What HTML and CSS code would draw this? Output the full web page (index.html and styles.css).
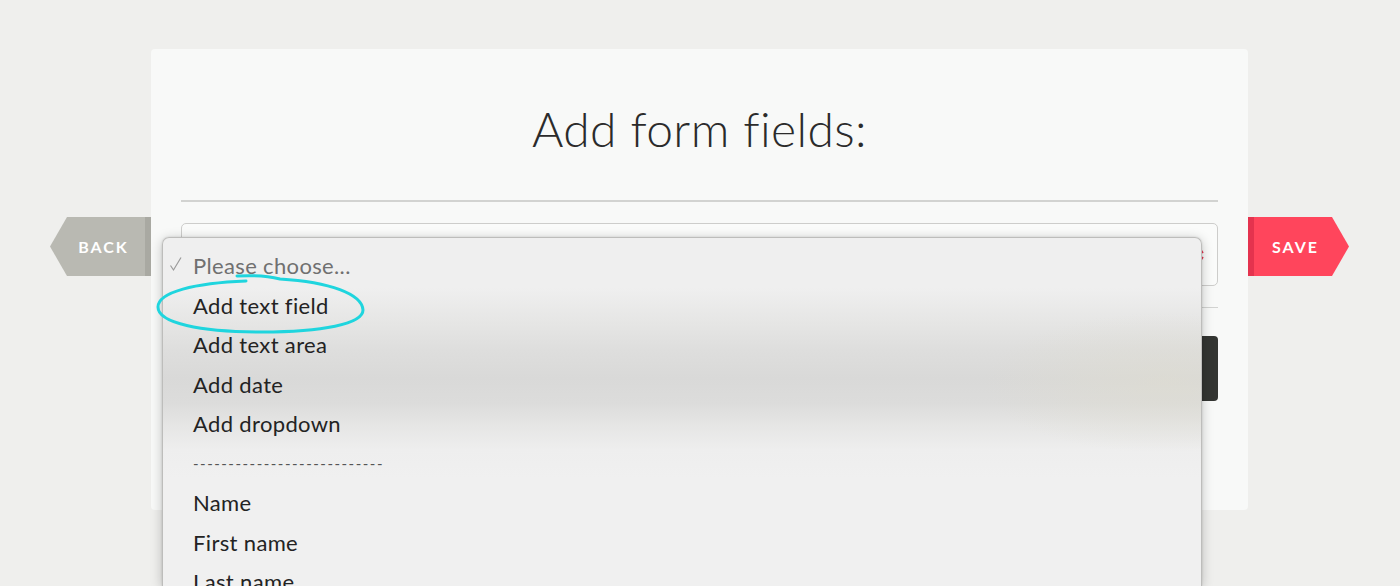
FILE: index.html
```html
<!DOCTYPE html>
<html>
<head>
<meta charset="utf-8">
<link rel="stylesheet" href="styles.css">
</head>
<body>
<div class="stage">
  <div class="row">
    <div class="side left">
      <div class="tag back"><span>BACK</span></div>
    </div>
    <div class="card">
      <h1 class="title">Add form fields:</h1>
      <div class="rule"></div>
      <div class="select">
        <span class="carets">
          <svg width="6" height="14" viewBox="0 0 6 14"><path d="M1 5 L3 2 L5 5" fill="none" stroke="#e8334f" stroke-width="1.6"/><path d="M1 9 L3 12 L5 9" fill="none" stroke="#e8334f" stroke-width="1.6"/></svg>
        </span>
      </div>
      <div class="rule rule2"></div>
      <div class="darkbtn"></div>
    </div>
    <div class="side right">
      <div class="tag save"><span>SAVE</span></div>
    </div>
  </div>

  <div class="menu">
    <ul class="items">
      <li class="item placeholder"><svg class="check" width="14" height="16" viewBox="0 0 14 16"><path d="M1.5 9.5 L4.5 14 L12 1.5" fill="none" stroke="#9a9a9a" stroke-width="1.2"/></svg>Please choose...</li>
      <li class="item">Add text field</li>
      <li class="item">Add text area</li>
      <li class="item">Add date</li>
      <li class="item">Add dropdown</li>
      <li class="item sep">---------------------------</li>
      <li class="item">Name</li>
      <li class="item">First name</li>
      <li class="item">Last name</li>
    </ul>
  </div>

  <svg class="circle" width="1400" height="586" viewBox="0 0 1400 586">
    <path d="M237 276 C255 275 268 276 280 279 C330 282 362 294 363 310 C363 324 322 332 262 332 C200 332 158 323 158 307 C158 292 195 283 246 281" fill="none" stroke="#1fd5de" stroke-width="3" stroke-linecap="round"/>
  </svg>
</div>
</body>
</html>
```

FILE: styles.css
```css
html, body {
  margin: 0;
  padding: 0;
}
body {
  background: #efefed;
  font-family: "Lato", "Open Sans", sans-serif;
  width: 1400px;
  height: 586px;
  overflow: hidden;
}
.stage {
  position: relative;
  width: 1400px;
  height: 586px;
  padding-top: 49px;
  box-sizing: border-box;
}
.row {
  display: flex;
  align-items: flex-start;
}
.side {
  width: 151px;
  padding-top: 168px;
  display: flex;
}
.side.left {
  justify-content: flex-end;
}
.side.right {
  justify-content: flex-start;
}
.tag {
  width: 101px;
  height: 59px;
  display: flex;
  align-items: center;
  justify-content: center;
  color: #fff;
  font-weight: 700;
  font-size: 16px;
  letter-spacing: 2px;
  box-sizing: border-box;
}
.tag.back {
  background: #b9b9b2;
  clip-path: polygon(17px 0, 100% 0, 100% 100%, 17px 100%, 0 50%);
  box-shadow: inset -6px 0 0 #a9a9a2;
  padding-left: 6px;
}
.tag.save {
  background: #ff455c;
  clip-path: polygon(0 0, calc(100% - 17px) 0, 100% 50%, calc(100% - 17px) 100%, 0 100%);
  box-shadow: inset 6px 0 0 #e4334e;
  padding-right: 6px;
}
.card {
  width: 1097px;
  height: 461px;
  background: #f8f9f8;
  border-radius: 4px;
  padding: 0 30px;
  box-sizing: border-box;
  display: flex;
  flex-direction: column;
}
.title {
  margin: 0;
  height: 151px;
  box-sizing: border-box;
  padding-top: 50px;
  text-align: center;
  font-weight: 300;
  font-size: 48px;
  letter-spacing: 0.4px;
  color: #2b2b2b;
  line-height: 60px;
}
.rule {
  height: 2px;
  background: #d2d3d1;
}
.select {
  margin-top: 21px;
  height: 63px;
  border: 1px solid #cdcdcb;
  border-radius: 5px;
  background: #fafbfa;
  box-sizing: border-box;
  display: flex;
  align-items: center;
  justify-content: flex-end;
  padding-right: 13px;
}
.carets {
  display: flex;
}
.rule2 {
  margin-top: 21px;
  height: 1px;
}
.darkbtn {
  margin-top: 28px;
  height: 65px;
  background: #333532;
  border-radius: 4px;
}
.menu {
  position: absolute;
  left: 162px;
  top: 237px;
  width: 1040px;
  height: 349px;
  box-sizing: border-box;
  border: 1px solid #bdbdbb;
  border-bottom: 0;
  border-radius: 7px 7px 0 0;
  overflow: hidden;
  background:
    radial-gradient(ellipse 180px 70px at 1000px 145px, rgba(222,220,208,0.6), rgba(222,220,208,0)),
    linear-gradient(to bottom, #efefef 0, #efefef 50px, #e7e7e6 80px, #dededd 112px, #d9d9d8 140px, #dcdcdb 165px, #e6e6e5 188px, #eeeeee 212px, #f0f0f0 240px, #f0f0f0 100%);
  box-shadow: 0 2px 12px rgba(0,0,0,0.22), 0 0 2px rgba(0,0,0,0.15);
}
.items {
  list-style: none;
  margin: 0;
  padding: 8px 0 0 0;
}
.item {
  position: relative;
  height: 39.5px;
  line-height: 39.5px;
  padding-left: 30px;
  font-size: 22px;
  letter-spacing: 0.35px;
  color: #232323;
  white-space: nowrap;
}
.item.placeholder {
  color: #707070;
}
.check {
  position: absolute;
  left: 6px;
  top: 10px;
}
.item.sep {
  font-size: 15px;
  letter-spacing: 1.5px;
  color: #555;
}
.circle {
  position: absolute;
  left: 0;
  top: 0;
  pointer-events: none;
}
```
